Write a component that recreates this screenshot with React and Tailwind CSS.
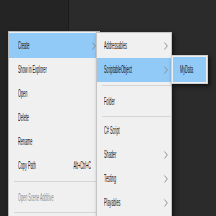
import React from "react";

const Chevron = () => (
  <svg width="4" height="8" viewBox="0 0 4 8" className="shrink-0">
    <path d="M0.5 0.5 L3.3 4 L0.5 7.5" fill="none" stroke="#8a8a8a" strokeWidth="0.9" />
  </svg>
);

const font = { fontFamily: '"Liberation Sans", Arial, sans-serif' };

const Label = ({ children, className = "" }) => (
  <span
    className={`block min-w-0 flex-1 whitespace-nowrap origin-left scale-x-[0.38] text-[10px] leading-none ${className}`}
    style={font}
  >
    {children}
  </span>
);

const Row = ({ label, h = "h-[24px]", active, arrow, shortcut, disabled, pl = "pl-[9px]", arrowPr = "pr-[3px]" }) => (
  <div className={`${h} flex items-center ${pl} ${arrowPr} ${active ? "bg-[#91c9f7]" : ""}`}>
    <Label className={disabled ? "text-[#8c8c8c]" : "text-[#111111]"}>{label}</Label>
    {shortcut && (
      <span
        className="block shrink-0 w-[18px] whitespace-nowrap text-right origin-right scale-x-[0.38] text-[10px] leading-none text-[#111111] mr-[5px] flex justify-end"
        style={font}
      >
        <span className="whitespace-nowrap">{shortcut}</span>
      </span>
    )}
    {arrow && <Chevron />}
  </div>
);

const Sep = ({ className }) => <div className={`h-px bg-[#d5d5d5] ml-[5px] ${className}`} />;

export default function App() {
  return (
    <div className="relative w-[216px] h-[216px] overflow-hidden bg-[#2a2a2a]">
      <div className="flex h-full">
        <div className="w-[69px] h-full bg-[#242424] border-r border-[#1c1c1c]" />
        <div className="flex-1 h-full bg-[#2b2b2b]" />
      </div>

      {/* Menu 1 */}
      <div className="absolute left-[8px] top-[31px] w-[92px] h-[200px] bg-[#f0f0f0] border border-[#b8b8b8] pt-px flex flex-col shadow-[2px_2px_4px_rgba(0,0,0,0.5)]">
        <Row label="Create" h="h-[25px]" active arrow />
        <Row label="Show in Explorer" />
        <Row label="Open" />
        <Row label="Delete" />
        <Row label="Rename" />
        <Row label="Copy Path" shortcut="Alt+Ctrl+C" />
        <Sep className="mt-[3px] mb-[4px]" />
        <Row label="Open Scene Additive" h="h-[24px]" disabled />
        <Sep className="mt-[2px]" />
      </div>

      {/* Menu 2 */}
      <div className="absolute left-[96px] top-[32px] w-[76px] h-[200px] bg-[#f0f0f0] border border-[#c4c4c4] pt-px flex flex-col shadow-[2px_2px_4px_rgba(0,0,0,0.5)]">
        <Row label="Addressables" arrow pl="pl-[7px]" />
        <Row label="ScriptableObject" active arrow pl="pl-[7px]" />
        <Sep className="mt-[3px] mb-[4px]" />
        <Row label="Folder" pl="pl-[7px]" />
        <Sep className="mt-[2px] mb-[2px]" />
        <Row label="C# Script" pl="pl-[7px]" />
        <Row label="Shader" arrow pl="pl-[7px]" />
        <Row label="Testing" arrow pl="pl-[7px]" />
        <Row label="Playables" arrow pl="pl-[7px]" />
      </div>

      {/* Menu 3 */}
      <div className="absolute left-[171px] top-[55px] w-[37px] h-[29px] bg-[#f0f0f0] border border-[#d0d0d0] p-px flex flex-col shadow-[2px_2px_4px_rgba(0,0,0,0.6)]">
        <Row label="MyData" h="h-[25px]" active pl="pl-[7px]" />
      </div>
    </div>
  );
}
